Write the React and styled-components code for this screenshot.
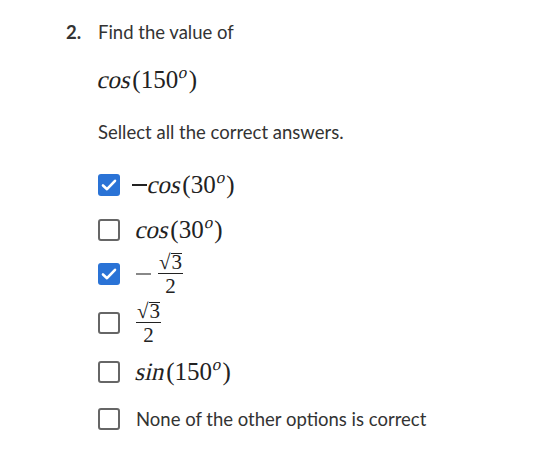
import React from "react";
import styled, { createGlobalStyle } from "styled-components";

const Global = createGlobalStyle`
  html, body { margin: 0; padding: 0; background: #fff; }
  body { font-family: "Lato", "Noto Sans", sans-serif; color: #333; }
`;

const Page = styled.div`
  padding: 21px 0 0 66px;
  display: flex;
`;

const Num = styled.div`
  width: 32px;
  font-weight: 700;
  font-size: 18.5px;
  line-height: 22px;
  color: #333;
`;

const Body = styled.div`
  display: flex;
  flex-direction: column;
`;

const Text = styled.div`
  font-size: 18.5px;
  line-height: 22px;
  margin-bottom: ${(p) => p.$mb || 0}px;
`;

const MathLine = styled.div`
  font-family: "Liberation Serif", "DejaVu Serif", serif;
  font-size: 25px;
  line-height: 28px;
  margin: ${(p) => p.$m || "0"};
  color: #222;
`;

const I = styled.span`
  display: inline-block;
  font-style: normal;
  transform: skewX(-13deg);
  margin-right: 1px;
`;

const Sup = styled.sup`
  display: inline-block;
  font-style: normal;
  transform: skewX(-13deg);
  font-size: 0.68em;
  vertical-align: 0.6em;
  line-height: 0;
  margin: 0 1px 0 1px;
`;

const Options = styled.div`
  display: flex;
  flex-direction: column;
`;

const Option = styled.label`
  display: flex;
  align-items: center;
  gap: ${(p) => p.$gap ?? 16}px;
  height: ${(p) => p.$h}px;
`;

const Box = styled.span`
  width: 22px;
  height: 22px;
  box-sizing: border-box;
  border-radius: 3px;
  flex: none;
  display: flex;
  align-items: center;
  justify-content: center;
  background: ${(p) => (p.$checked ? "#2a73d6" : "#fff")};
  border: ${(p) => (p.$checked ? "none" : "2.5px solid #666")};
`;

const OptMath = styled.span`
  font-family: "Liberation Serif", "DejaVu Serif", serif;
  font-size: 25px;
  line-height: 28px;
  color: #222;
  display: inline-flex;
  align-items: center;
`;

const Expr = styled.span`
  display: inline-block;
  white-space: nowrap;
`;

const Minus = styled.span`
  display: inline-block;
  width: 15px;
  height: 1.5px;
  background: ${(p) => (p.$light ? "#888" : "#222")};
  vertical-align: 0.3em;
  margin-right: ${(p) => (p.$gap ? 7 : 1)}px;
`;

const Frac = styled.span`
  display: inline-flex;
  flex-direction: column;
  align-items: center;
  font-family: "Liberation Serif", "DejaVu Serif", serif;
  font-size: 21px;
  line-height: 18px;
  color: #222;
`;

const FracTop = styled.span`
  display: inline-flex;
  align-items: flex-end;
  padding: 0 1px 2px;
  border-bottom: 1.2px solid #222;
`;

const Radicand = styled.span`
  border-top: 1px solid #222;
  padding-left: 1px;
  line-height: 17px;
`;

const FracBot = styled.span`
  padding-top: 3px;
`;

const OptText = styled.span`
  font-size: 18.5px;
  color: #333;
`;

const Check = () => (
  <svg width="18" height="18" viewBox="0 0 18 18">
    <path d="M3 9.5 L7 13.2 L15 4.8" fill="none" stroke="#fff" strokeWidth="2.6" strokeLinecap="round" strokeLinejoin="round" />
  </svg>
);

const Sqrt3Over2 = () => (
  <Frac>
    <FracTop>
      <span>√</span>
      <Radicand>3</Radicand>
    </FracTop>
    <FracBot>2</FracBot>
  </Frac>
);

export default function App() {
  return (
    <>
      <Global />
      <Page>
        <Num>2.</Num>
        <Body>
          <Text>Find the value of</Text>
          <MathLine $m="23px 0 27px">
            <I>cos</I>(150<Sup>o</Sup>)
          </MathLine>
          <Text $mb={20}>Sellect all the correct answers.</Text>
          <Options>
            <Option $h={44} $gap={12}>
              <Box $checked><Check /></Box>
              <OptMath>
                <Expr>
                  <Minus /><I>cos</I>(30<Sup>o</Sup>)
                </Expr>
              </OptMath>
            </Option>
            <Option $h={46}>
              <Box />
              <OptMath>
                <Expr>
                  <I>cos</I>(30<Sup>o</Sup>)
                </Expr>
              </OptMath>
            </Option>
            <Option $h={42}>
              <Box $checked><Check /></Box>
              <OptMath>
                <Minus $light $gap />
                <Sqrt3Over2 />
              </OptMath>
            </Option>
            <Option $h={56}>
              <Box />
              <OptMath>
                <Sqrt3Over2 />
              </OptMath>
            </Option>
            <Option $h={42}>
              <Box />
              <OptMath>
                <Expr>
                  <I>sin</I>(150<Sup>o</Sup>)
                </Expr>
              </OptMath>
            </Option>
            <Option $h={52}>
              <Box />
              <OptText>None of the other options is correct</OptText>
            </Option>
          </Options>
        </Body>
      </Page>
    </>
  );
}
